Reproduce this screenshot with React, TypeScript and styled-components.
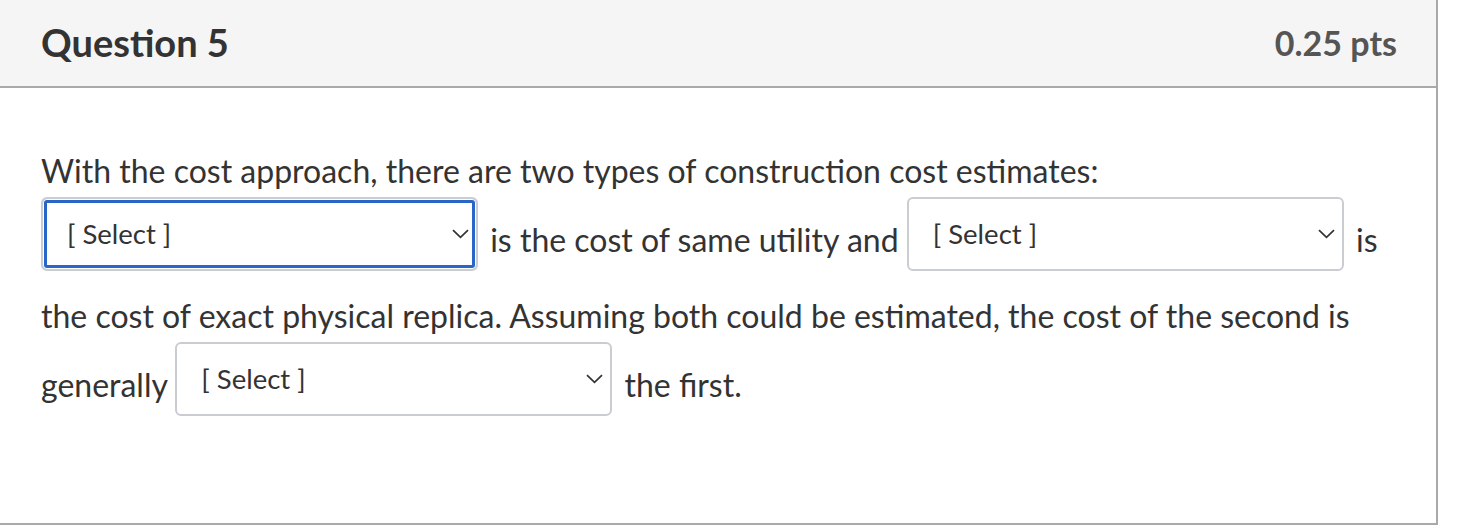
import styled, { createGlobalStyle } from 'styled-components';

const GlobalStyle = createGlobalStyle`
  html, body {
    margin: 0;
    padding: 0;
    background: #ffffff;
  }
  body {
    font-family: Lato, 'Open Sans', sans-serif;
    color: #333333;
  }
`;

interface SelectProps {
  focused?: boolean;
}

const Card = styled.section`
  width: 1438px;
  box-sizing: border-box;
  border-right: 2px solid #a9a9a9;
  border-bottom: 2px solid #a9a9a9;
  background: #ffffff;
`;

const Header = styled.header`
  height: 88px;
  box-sizing: border-box;
  display: flex;
  align-items: center;
  justify-content: space-between;
  padding: 0 39px 2px 41px;
  background: #f5f5f5;
  border-bottom: 2px solid #a9a9a9;
`;

const Title = styled.h2`
  margin: 0;
  font-size: 38px;
  font-weight: 700;
  color: #333333;
`;

const Points = styled.div`
  font-size: 34px;
  font-weight: 700;
  color: #555555;
`;

const Body = styled.div`
  padding: 57.6px 41px 87px 41px;
`;

const QuestionText = styled.p`
  margin: 0;
  font-size: 32px;
  line-height: 50px;
  color: #333333;
`;

const Select = styled.span<SelectProps>`
  display: inline-flex;
  align-items: center;
  box-sizing: border-box;
  width: 437px;
  height: 74px;
  margin: 1px 4px 20px 0;
  padding: 0 7px 0 24px;
  vertical-align: middle;
  border: 2px solid #c9cdd1;
  border-radius: 6px;
  background: #ffffff;
  box-shadow: ${({ focused }) =>
    focused ? 'inset 0 0 0 1px #ffffff, inset 0 0 0 4px #2a66c8' : 'none'};
  font-size: 27.5px;
  line-height: normal;
  color: #333333;
  cursor: pointer;
`;

const SelectLabel = styled.span`
  flex: 1;
`;

const Chevron = () => (
  <svg width="17" height="10" viewBox="0 0 17 10" fill="none">
    <path d="M1 1.2 L8.5 8.4 L16 1.2" stroke="#333333" strokeWidth="1.7" />
  </svg>
);

const Dropdown = ({ focused }: SelectProps) => (
  <Select focused={focused} role="combobox">
    <SelectLabel>[ Select ]</SelectLabel>
    <Chevron />
  </Select>
);

export default function App() {
  return (
    <>
      <GlobalStyle />
      <Card>
        <Header>
          <Title>Question 5</Title>
          <Points>0.25 pts</Points>
        </Header>
        <Body>
          <QuestionText>
            With the cost approach, there are two types of construction cost estimates:{' '}
            <Dropdown focused /> is the cost of same utility and <Dropdown /> is the cost of
            exact physical replica. Assuming both could be estimated, the cost of the second is
            generally <Dropdown /> the first.
          </QuestionText>
        </Body>
      </Card>
    </>
  );
}
